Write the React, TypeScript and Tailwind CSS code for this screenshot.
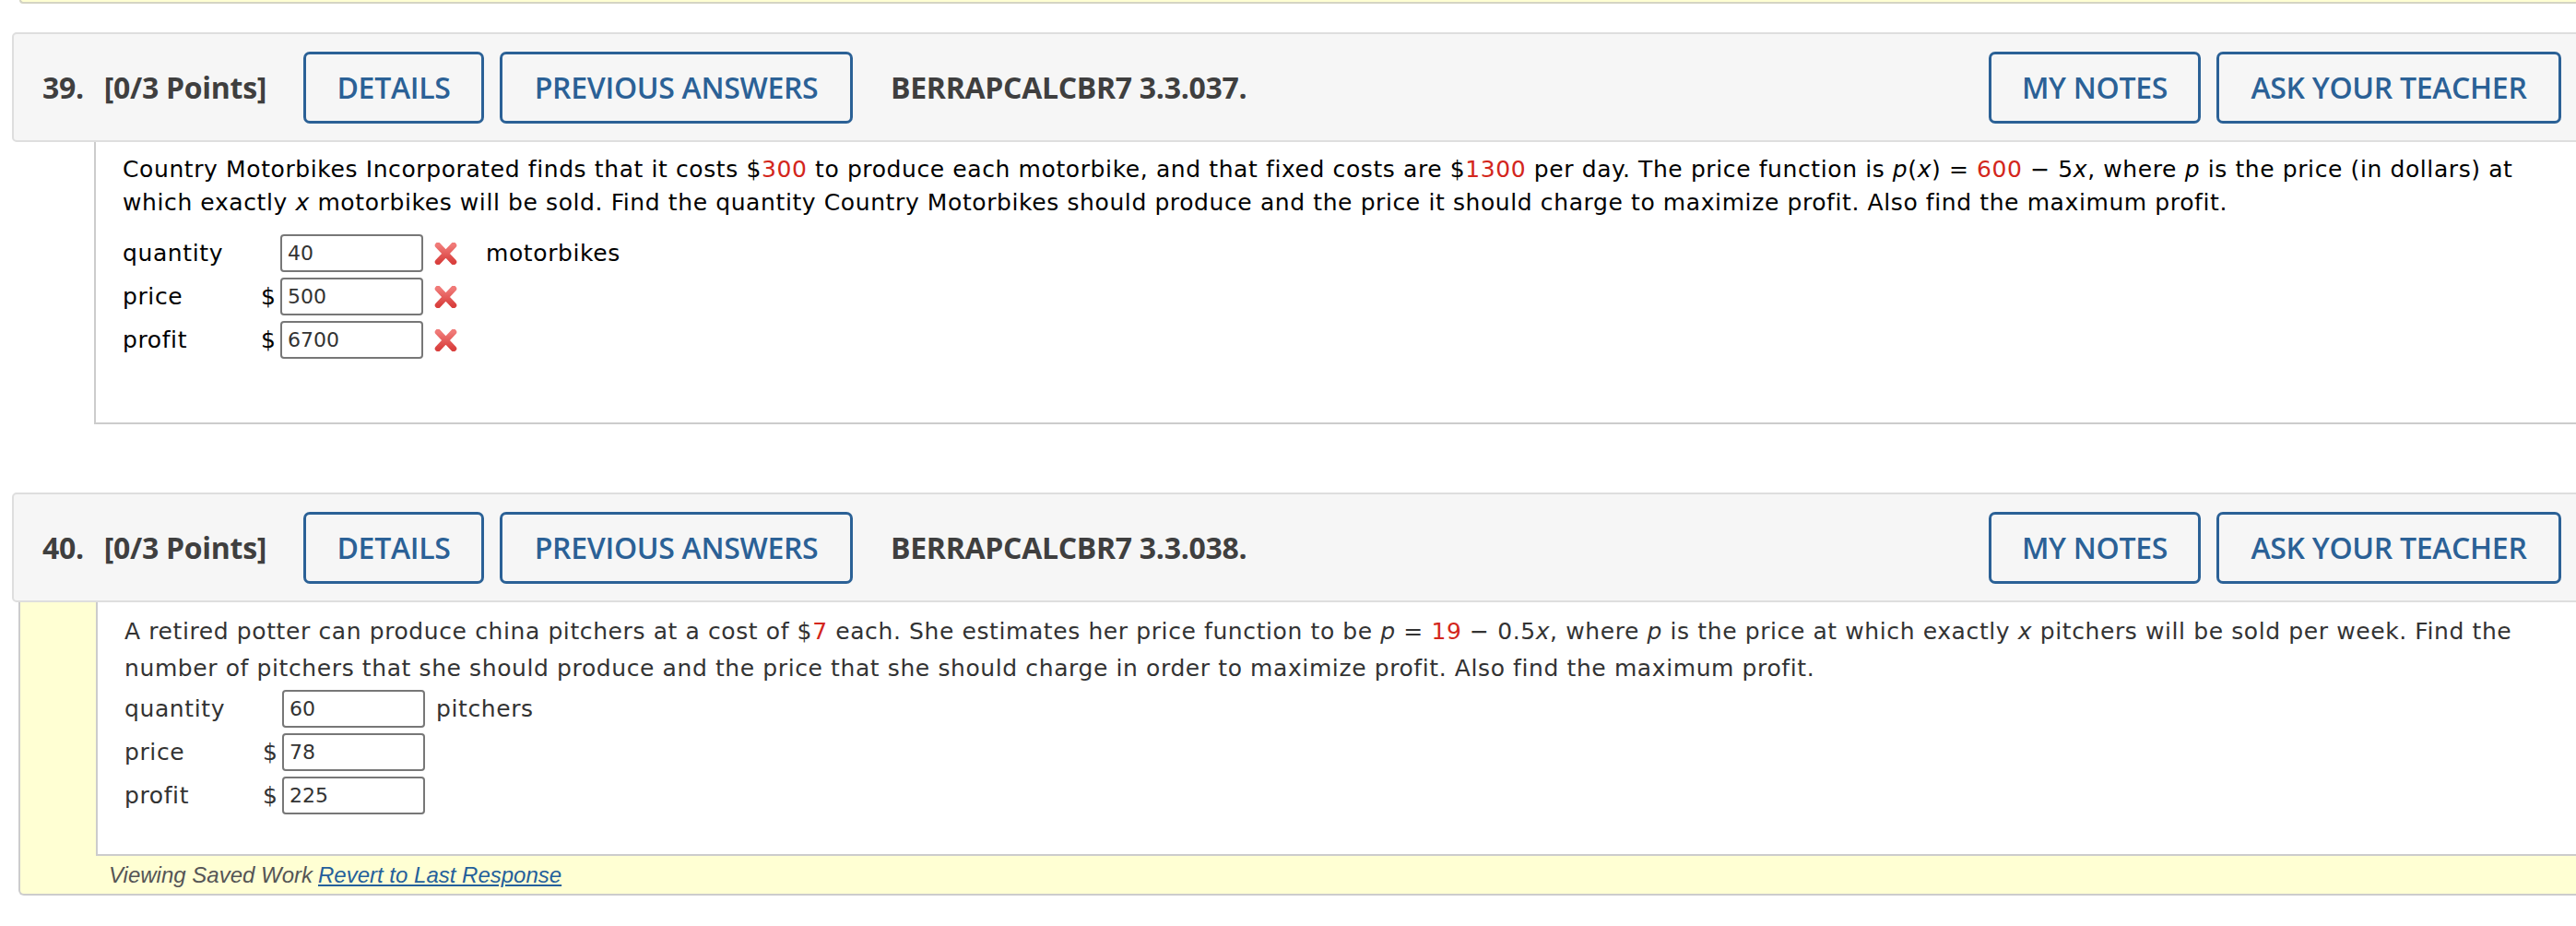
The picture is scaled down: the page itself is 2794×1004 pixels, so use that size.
import React from 'react';

const headFont = { fontFamily: '"Open Sans", "Liberation Sans", sans-serif' };
const bodyFont = { fontFamily: '"DejaVu Sans", Verdana, sans-serif' };
const noteFont = { fontFamily: '"Liberation Sans", Arial, sans-serif' };

const Red = ({ children }: { children: React.ReactNode }) => <span className="text-[#d3261c]">{children}</span>;

const HeaderButton = ({ label, width }: { label: string; width: string }) => (
	<button
		className={`${width} h-[78px] shrink-0 rounded-[7px] border-[3px] border-[#2b6196] bg-transparent text-[32px] font-semibold tracking-[-0.3px] text-[#2b6196]`}
		style={headFont}
	>
		{label}
	</button>
);

const QuestionHeader = ({ num, code }: { num: string; code: string }) => (
	<div className="ml-[13px] flex h-[119px] w-[2789px] items-center rounded-[5px] border-2 border-[#dedede] bg-[#f6f6f6] pl-[31px] pr-[22px]" style={headFont}>
		<span className="text-[32px] font-bold tracking-[-0.3px] text-[#3f3f3f]">{num}</span>
		<span className="ml-[22px] text-[32px] font-bold tracking-[-0.3px] text-[#3f3f3f]">[0/3 Points]</span>
		<div className="ml-[40px] flex items-center gap-[17px]">
			<HeaderButton label="DETAILS" width="w-[196px]" />
			<HeaderButton label="PREVIOUS ANSWERS" width="w-[383px]" />
		</div>
		<span className="ml-[41px] text-[32px] font-bold tracking-[-0.3px] text-[#3f3f3f]">{code}</span>
		<div className="flex-1" />
		<div className="flex items-center gap-[17px]">
			<HeaderButton label="MY NOTES" width="w-[230px]" />
			<HeaderButton label="ASK YOUR TEACHER" width="w-[374px]" />
		</div>
	</div>
);

const WrongMark = () => (
	<svg width="27" height="24" viewBox="0 0 27 24" className="shrink-0">
		<defs>
			<linearGradient id="xg" x1="0" y1="0" x2="0" y2="1">
				<stop offset="0" stopColor="#f07a78" />
				<stop offset="1" stopColor="#d9403e" />
			</linearGradient>
		</defs>
		<path d="M5 3 L22 21 M22 3 L5 21" stroke="url(#xg)" strokeWidth="6.5" strokeLinecap="round" fill="none" />
	</svg>
);

type RowProps = {
	label: string;
	dollar?: boolean;
	value: string;
	wrong?: boolean;
	unit?: string;
	unitGap: string;
	color: string;
};

const AnswerRow = ({ label, dollar, value, wrong, unit, unitGap, color }: RowProps) => (
	<div className={`flex h-[41px] items-center text-[25px] tracking-[0.6px] ${color}`} style={bodyFont}>
		<div className="w-[150px] shrink-0">{label}</div>
		<div className="w-[21px] shrink-0 tracking-normal">{dollar ? '$' : ''}</div>
		<input
			readOnly
			value={value}
			className="h-[41px] w-[155px] shrink-0 rounded-[4px] border-2 border-[#777] bg-white px-[6px] text-[22px] tracking-normal text-[#333] outline-none"
			style={bodyFont}
		/>
		{wrong && (
			<div className="ml-[11px]">
				<WrongMark />
			</div>
		)}
		{unit && <div className={unitGap}>{unit}</div>}
	</div>
);

export default function App() {
	return (
		<div className="min-h-screen w-full overflow-hidden bg-white">
			{/* tail of the previous question */}
			<div className="ml-[21px] h-[4px] rounded-bl-[4px] border-b-2 border-l-2 border-[#d4d4c4] bg-[#ffffd3]" />

			{/* question 39 */}
			<div className="mt-[31px]">
				<QuestionHeader num="39." code="BERRAPCALCBR7 3.3.037." />
				<div className="ml-[102px] h-[306px] border-b-2 border-l-2 border-[#cccccc] pl-[29px] pt-[12px]">
					<p className="whitespace-nowrap text-[25px] leading-[36px] tracking-[0.6px] text-black" style={bodyFont}>
						Country Motorbikes Incorporated finds that it costs $<Red>300</Red> to produce each motorbike, and that fixed costs are $
						<Red>1300</Red> per day. The price function is <i>p</i>(<i>x</i>) = <Red>600</Red> − 5<i>x</i>, where <i>p</i> is the price (in
						dollars) at
						<br />
						which exactly <i>x</i> motorbikes will be sold. Find the quantity Country Motorbikes should produce and the price it should charge to
						maximize profit. Also find the maximum profit.
					</p>
					<div className="mt-[16px] flex flex-col gap-[6px]">
						<AnswerRow label="quantity" value="40" wrong unit="motorbikes" unitGap="ml-[30px]" color="text-black" />
						<AnswerRow label="price" dollar value="500" wrong unitGap="" color="text-black" />
						<AnswerRow label="profit" dollar value="6700" wrong unitGap="" color="text-black" />
					</div>
				</div>
			</div>

			{/* question 40 */}
			<div className="mt-[74px]">
				<QuestionHeader num="40." code="BERRAPCALCBR7 3.3.038." />
				<div className="ml-[20px] rounded-bl-[6px] border-b-2 border-l-2 border-[#cccccc] bg-[#ffffd3]">
					<div className="ml-[82px] h-[275px] border-b-2 border-l-2 border-[#cccccc] bg-white pl-[29px] pt-[12px]">
						<p className="whitespace-nowrap text-[25px] leading-[40px] tracking-[0.6px] text-[#333]" style={bodyFont}>
							A retired potter can produce china pitchers at a cost of $<Red>7</Red> each. She estimates her price function to be <i>p</i> ={' '}
							<Red>19</Red> − 0.5<i>x</i>, where <i>p</i> is the price at which exactly <i>x</i> pitchers will be sold per week. Find the
							<br />
							number of pitchers that she should produce and the price that she should charge in order to maximize profit. Also find the maximum
							profit.
						</p>
						<div className="mt-[3px] flex flex-col gap-[6px]">
							<AnswerRow label="quantity" value="60" unit="pitchers" unitGap="ml-[12px]" color="text-[#333]" />
							<AnswerRow label="price" dollar value="78" unitGap="" color="text-[#333]" />
							<AnswerRow label="profit" dollar value="225" unitGap="" color="text-[#333]" />
						</div>
					</div>
					<div className="flex h-[41px] items-center pl-[96px] text-[24px] italic text-[#555]" style={noteFont}>
						<span>Viewing Saved Work</span>
						<a href="#revert" className="ml-[6px] text-[#24609b] underline">
							Revert to Last Response
						</a>
					</div>
				</div>
			</div>
		</div>
	);
}
